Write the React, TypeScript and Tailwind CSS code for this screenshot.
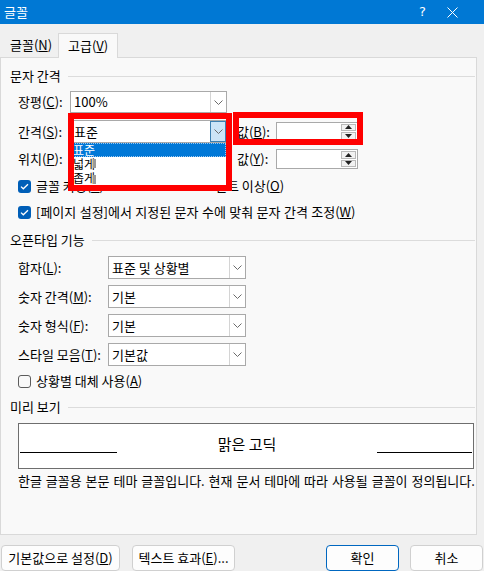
import React from 'react';

const Chevron = () => (
  <svg width="9" height="5" viewBox="0 0 9 5" fill="none">
    <path d="M0.5 0.5L4.5 4.5L8.5 0.5" stroke="#6b6b6b" strokeWidth="1" />
  </svg>
);

const Combo = ({ value, width, height, open }: { value: string; width: string; height: string; open?: boolean }) => (
  <div className={`flex bg-white border border-[#a9a9a9] ${width} ${height}`}>
    <div className="flex-1 flex items-center pl-[3px]">{value}</div>
    <div
      className={
        open
          ? 'w-[16px] flex items-center justify-center border border-[#3c7fb1] bg-[#cce4f7]'
          : 'w-[16px] flex items-center justify-center border-l border-[#d4d4d4] bg-white'
      }
    >
      <Chevron />
    </div>
  </div>
);

const SpinBtn = ({ up }: { up?: boolean }) => (
  <div className="flex-1 flex items-center justify-center border border-[#b9b9b9] bg-[#f2f2f2]">
    <svg width="7" height="4" viewBox="0 0 7 4">
      {up ? <path d="M0 4L3.5 0L7 4Z" fill="#222" /> : <path d="M0 0L3.5 4L7 0Z" fill="#222" />}
    </svg>
  </div>
);

const Spin = ({ width = 'w-[82px]', height = 'h-[20px]' }: { width?: string; height?: string }) => (
  <div className={`flex justify-end bg-white border border-[#a9a9a9] p-px ${width} ${height}`}>
    <div className="w-[15px] flex flex-col gap-px">
      <SpinBtn up />
      <SpinBtn />
    </div>
  </div>
);

const Check = ({ checked }: { checked?: boolean }) =>
  checked ? (
    <div className="w-[13px] h-[13px] shrink-0 rounded-[3px] bg-[#005fb8] flex items-center justify-center">
      <svg width="9" height="7" viewBox="0 0 9 7" fill="none">
        <path d="M1 3.6L3.3 5.8L8 1.2" stroke="white" strokeWidth="1.3" />
      </svg>
    </div>
  ) : (
    <div className="w-[13px] h-[13px] shrink-0 rounded-[3px] border border-[#5c5c5c] bg-[#f9f9f9]" />
  );

const Heading = ({ children }: { children: React.ReactNode }) => (
  <div className="flex items-center h-[16px] pl-[9px] pr-[1px]">
    <span>{children}</span>
    <div className="flex-1 h-px bg-[#dcdcdc] ml-[7px]" />
  </div>
);

const OtRow = ({ label, value, first }: { label: React.ReactNode; value: string; first?: boolean }) => (
  <div className={first ? 'flex items-center h-[23px] pl-[17px] mt-[8px]' : 'flex items-center h-[23px] pl-[17px] mt-[6px]'}>
    <div className="w-[90px] whitespace-nowrap">{label}</div>
    <Combo value={value} width="w-[138px]" height="h-[23px]" />
  </div>
);

export default function App() {
  return (
    <div className="w-[484px] h-[571px] overflow-hidden bg-[#f0f0f0] flex flex-col text-[13px] leading-[16px] text-black font-['Noto_Sans_CJK_KR','Malgun_Gothic',sans-serif]">
      {/* title bar */}
      <div className="h-[24px] shrink-0 bg-[#0078d4] text-white flex items-center pl-[4px] pr-[26px]">
        <span className="text-[13px]">글꼴</span>
        <span className="ml-auto text-[13px] font-['DejaVu_Sans',sans-serif]">?</span>
        <svg className="ml-[21px]" width="11" height="11" viewBox="0 0 11 11">
          <path d="M0.5 0.5L10.5 10.5M10.5 0.5L0.5 10.5" stroke="white" strokeWidth="1" />
        </svg>
      </div>

      {/* tabs */}
      <div className="h-[33px] shrink-0 flex items-end pl-[2px]">
        <div className="w-[56px] h-[24px] pl-[8px] flex items-center whitespace-nowrap">
          글꼴(<u>N</u>)
        </div>
        <div className="relative z-10 -mb-px w-[60px] h-[25px] pl-[9px] flex items-center whitespace-nowrap bg-[#f9f9f9] border border-b-0 border-[#d9d9d9]">
          고급(<u>V</u>)
        </div>
      </div>

      {/* panel */}
      <div className="relative w-[477px] h-[478px] shrink-0 bg-[#f9f9f9] border border-[#d9d9d9] flex flex-col">
        <div className="mt-[10px]">
          <Heading>문자 간격</Heading>
        </div>

        <div className="flex items-center h-[22px] pl-[17px] mt-[7px]">
          <div className="w-[52px] whitespace-nowrap">장평(<u>C</u>):</div>
          <Combo value="100%" width="w-[157px]" height="h-[22px]" />
        </div>

        <div className="flex items-center h-[23px] pl-[17px] mt-[7px]">
          <div className="w-[52px] whitespace-nowrap">간격(<u>S</u>):</div>
          <Combo value="표준" width="w-[157px]" height="h-[23px]" open />
          <div className="w-[39px] ml-[10px] whitespace-nowrap">값(<u>B</u>):</div>
          <Spin />
        </div>

        <div className="flex items-center h-[20px] pl-[17px] mt-[6px]">
          <div className="w-[52px] whitespace-nowrap">위치(<u>P</u>):</div>
          <Combo value="" width="w-[157px]" height="h-[20px]" />
          <div className="w-[39px] ml-[10px] whitespace-nowrap">값(<u>Y</u>):</div>
          <Spin />
        </div>

        <div className="flex items-center h-[16px] pl-[17px] mt-[9px]">
          <Check checked />
          <div className="w-[82px] pl-[5px] whitespace-nowrap">글꼴 커닝(<u>K</u>):</div>
          <div className="mb-[10px]">
            <Spin width="w-[78px]" />
          </div>
          <div className="ml-[12px] whitespace-nowrap">포인트 이상(<u>O</u>)</div>
        </div>

        <div className="flex items-center h-[16px] pl-[17px] mt-[10px]">
          <Check checked />
          <div className="pl-[5px] whitespace-nowrap [word-spacing:0.5px]">[페이지 설정]에서 지정된 문자 수에 맞춰 문자 간격 조정(<u>W</u>)</div>
        </div>

        <div className="mt-[12px]">
          <Heading>오픈타입 기능</Heading>
        </div>

        <OtRow first label={<>합자(<u>L</u>):</>} value="표준 및 상황별" />
        <OtRow label={<>숫자 간격(<u>M</u>):</>} value="기본" />
        <OtRow label={<>숫자 형식(<u>F</u>):</>} value="기본" />
        <OtRow label={<>스타일 모음(<u>T</u>):</>} value="기본값" />

        <div className="flex items-center h-[16px] pl-[17px] mt-[7px]">
          <Check />
          <div className="pl-[5px]">상황별 대체 사용(<u>A</u>)</div>
        </div>

        <div className="mt-[10px]">
          <Heading>미리 보기</Heading>
        </div>

        <div className="ml-[17px] mt-[8px] w-[456px] h-[46px] bg-white border border-[#6e6e6e] flex items-center px-px">
          <div className="w-[97px] h-px bg-black mt-[12px]" />
          <div className="flex-1 text-center text-[15px] leading-[20px] mb-[4px]">맑은 고딕</div>
          <div className="w-[95px] h-px bg-black mt-[12px]" />
        </div>

        <div className="pl-[17px] mt-[4px] whitespace-nowrap [word-spacing:1px]">
          한글 글꼴용 본문 테마 글꼴입니다. 현재 문서 테마에 따라 사용될 글꼴이 정의됩니다.
        </div>

        {/* open dropdown list */}
        <div className="absolute left-[71px] top-[85px] w-[154px] h-[43px] bg-white flex flex-col text-[12px] leading-[14px]">
          <div className="h-[14px] bg-[#0078d7] text-white pl-px outline-1 outline-dotted outline-[#9cc8ef] -outline-offset-1">표준</div>
          <div className="h-[14px] pl-px">넓게</div>
          <div className="h-[14px] pl-px">좁게</div>
          <div className="absolute left-[21px] top-[16px] w-[3px] h-[9px] bg-[#9a9a9a]" />
          <div className="absolute left-[21px] top-[32px] w-[3px] h-[9px] bg-[#9a9a9a]" />
        </div>

        {/* red highlight boxes */}
        <div className="absolute left-[67px] top-[55px] w-[164px] h-[78px] border-[6px] border-[#ff0000]" />
        <div className="absolute left-[232px] top-[54px] w-[130px] h-[33px] border-[6px] border-[#ff0000]" />
      </div>

      {/* buttons */}
      <div className="flex h-[26px] mt-[10px] shrink-0">
        <div className="ml-[1px] w-[119px] h-full flex items-center justify-center bg-[#fdfdfd] border border-[#d0d0d0] rounded-[4px]">
          기본값으로 설정(<u>D</u>)
        </div>
        <div className="ml-[12px] w-[103px] h-full flex items-center justify-center bg-[#fdfdfd] border border-[#d0d0d0] rounded-[4px]">
          텍스트 효과(<u>E</u>)...
        </div>
        <div className="ml-auto w-[73px] h-full flex items-center justify-center bg-[#fdfdfd] border border-[#0067c0] rounded-[4px]">
          확인
        </div>
        <div className="ml-[11px] mr-[1px] w-[73px] h-full flex items-center justify-center bg-[#fdfdfd] border border-[#d0d0d0] rounded-[4px]">
          취소
        </div>
      </div>
    </div>
  );
}
